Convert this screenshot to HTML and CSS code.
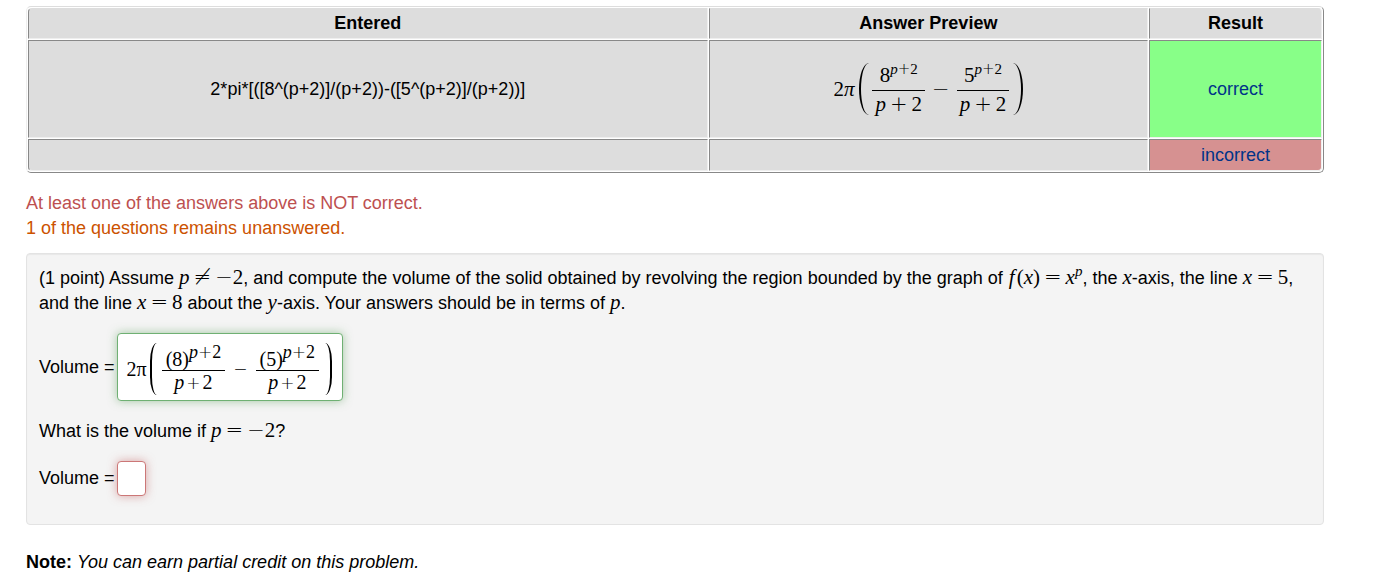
FILE: index.html
```html
<!DOCTYPE html>
<html lang="en">
<head>
<meta charset="utf-8">
<meta name="viewport" content="width=device-width, initial-scale=1">
<title>Problem</title>
<link rel="stylesheet" href="styles.css">
</head>
<body>
<main class="page">
  <table class="results">
    <thead>
      <tr><th class="col-entered" scope="col">Entered</th><th class="col-preview" scope="col">Answer Preview</th><th class="col-result" scope="col">Result</th></tr>
    </thead>
    <tbody>
      <tr class="row-tall">
        <td>2*pi*[([8^(p+2)]/(p+2))-([5^(p+2)]/(p+2))]</td>
        <td>
          <span class="formula">
            <span class="coef">2<i>π</i></span>
            <span class="paren paren-left"></span>
            <span class="frac"><span class="num">8<sup><i>p</i><span class="op">+</span>2</sup></span><span class="den"><i>p</i><span class="op">+</span>2</span></span>
            <span class="op minus">−</span>
            <span class="frac"><span class="num">5<sup><i>p</i><span class="op">+</span>2</sup></span><span class="den"><i>p</i><span class="op">+</span>2</span></span>
            <span class="paren paren-right"></span>
          </span>
        </td>
        <td class="correct"><a href="#answer-1">correct</a></td>
      </tr>
      <tr>
        <td></td>
        <td></td>
        <td class="incorrect"><a href="#answer-2">incorrect</a></td>
      </tr>
    </tbody>
  </table>

  <div class="messages">
    <p class="msg-error">At least one of the answers above is NOT correct.</p>
    <p class="msg-warn">1 of the questions remains unanswered.</p>
  </div>

  <section class="problem">
    <p>(1 point) Assume <span class="math"><i>p</i><span class="op rel">≠</span><span class="op">−</span>2</span>, and compute the volume of the solid obtained by revolving the region bounded by the graph of <span class="math"><i class="f">f</i>(<i>x</i>)<span class="op rel">=</span><i>x</i><sup><i>p</i></sup></span>, the <span class="math"><i>x</i></span>-axis, the line <span class="math"><i>x</i><span class="op rel">=</span>5</span>,
    and the line <span class="math"><i>x</i><span class="op rel">=</span>8</span> about the <span class="math"><i>y</i></span>-axis. Your answers should be in terms of <span class="math"><i>p</i></span>.</p>

    <div class="answer">
      <span id="label-1">Volume =</span>
      <div class="field field-correct" id="answer-1" role="textbox" contenteditable="true" spellcheck="false" aria-labelledby="label-1"><span class="formula entry"><span class="coef">2π</span><span class="paren paren-left"></span><span class="frac"><span class="num">(8)<sup><i>p</i><span class="op">+</span>2</sup></span><span class="den"><i>p</i><span class="op">+</span>2</span></span><span class="op minus">−</span><span class="frac"><span class="num">(5)<sup><i>p</i><span class="op">+</span>2</sup></span><span class="den"><i>p</i><span class="op">+</span>2</span></span><span class="paren paren-right"></span></span></div>
    </div>

    <p>What is the volume if <span class="math"><i>p</i><span class="op rel">=</span><span class="op">−</span>2</span>?</p>

    <div class="answer">
      <label for="answer-2">Volume =</label>
      <input class="field field-incorrect" id="answer-2" type="text">
    </div>
  </section>

  <p class="note"><b>Note:</b> <em>You can earn partial credit on this problem.</em></p>
</main>
</body>
</html>
```

FILE: styles.css
```css
* { box-sizing: border-box; }

body {
  margin: 0;
  background: #fff;
  color: #000;
  font: 18px/25px "Liberation Sans", Arial, sans-serif;
}

p { margin: 0; }

.page { padding: 6px 52px 0 26px; }

/* Results table */
.results {
  width: 100%;
  table-layout: fixed;
  border: 1px solid;
  border-color: #ddd #888 #888 #eee;
  border-radius: 5px;
  border-spacing: 1px;
  text-align: center;
}
.results th,
.results td {
  height: 32px;
  padding: 2px 4px;
  background: #ddd;
  border: 1px solid;
  border-color: #888 #eee #eee #888;
}
.results th {
  height: 31px;
  padding: 1px 4px 2px;
  border-top-color: #ddd;
}
.results tr:first-child th:first-child { border-top-left-radius: 4px; }
.results tr:first-child th:last-child { border-top-right-radius: 4px; }
.results tr:last-child td:first-child { border-bottom-left-radius: 4px; }
.results tr:last-child td:last-child { border-bottom-right-radius: 4px; }
.col-preview { width: 34%; }
.col-result { width: 173px; }
.results .row-tall td { height: 98px; }
.results .correct { background: #8f8; }
.results .incorrect { background: #d69191; }
.results a { color: #038; text-decoration: none; }

/* Messages */
.messages { margin: 18px 0 12px; }
.msg-error { color: #bd5050; }
.msg-warn { color: #cc5200; }

/* Math */
.math,
.formula {
  font-family: "Liberation Serif", "Times New Roman", serif;
  font-size: 21px;
  line-height: 1;
  white-space: nowrap;
}
.op {
  font-family: "DejaVu Sans Light", "DejaVu Sans", sans-serif;
  font-weight: 200;
  line-height: 0;
}
.rel { margin: 0 4px; }
.math .f { padding: 0 2px 0 1px; }
sup { font-size: 15px; line-height: 0; vertical-align: 8px; }

.formula { display: inline-flex; align-items: center; vertical-align: middle; }
.frac { display: flex; flex-direction: column; text-align: center; }
.num { padding: 0 5px; border-bottom: 1px solid; }
.formula .num { height: 31px; padding-top: 5px; }
.den { height: 27px; padding: 3px 3px 0; }
.den .op { margin: 0 4px; }
.minus { margin: 0 7px; }
.paren { width: 10px; height: 52px; }
.paren-left { margin: 0 3px 0 5px; border-left: 2px solid; border-radius: 10px 0 0 10px / 26px 0 0 26px; }
.paren-right { margin-left: 4px; border-right: 2px solid; border-radius: 0 10px 10px 0 / 0 26px 26px 0; }

/* Problem panel */
.problem {
  padding: 12px 12px 28px;
  background: #f4f4f4;
  border: 1px solid #e3e3e3;
  border-radius: 4px;
  box-shadow: inset 0 1px 1px rgba(0, 0, 0, 0.05);
}
.answer { display: flex; align-items: center; gap: 2px; margin: 17px 0 18px; }
.answer:last-child { margin-bottom: 0; }

.field {
  background: #fff;
  border: 1px solid;
  border-radius: 4px;
  outline: 0;
}
.field-correct {
  height: 68px;
  padding: 9px 10px 5px 9px;
  border-color: #6fb073;
  box-shadow: 0 0 10px rgba(81, 153, 81, 0.5);
}
.field-incorrect {
  width: 29px;
  height: 35px;
  padding: 4px;
  border-color: #c77;
  box-shadow: 0 0 10px rgba(191, 84, 84, 0.5);
}

.entry { font-size: 20px; }
.entry sup { font-size: 18px; }
.entry .num { height: 28px; padding: 6px 4px 0; }
.entry .den { height: 24px; padding-top: 1px; }
.entry .op { font-size: 17px; }
.entry .minus { margin: 0 8px; }
.entry .den .op { margin: 0 2px; }
.entry .paren { width: 7px; }
.entry .paren-left { margin: 0 5px 0 3px; }
.entry .paren-right { margin-left: 6px; }

.note { margin-top: 25px; }
```
